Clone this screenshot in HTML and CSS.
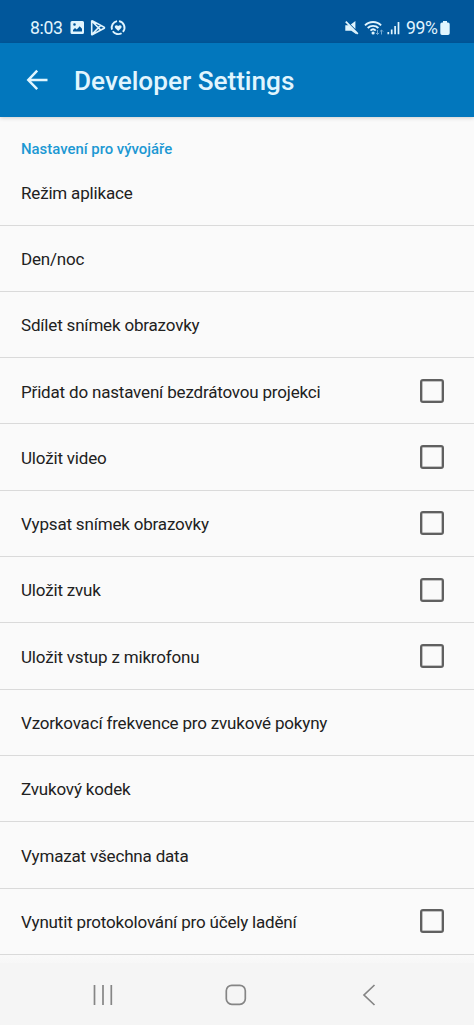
FILE: index.html
```html
<!DOCTYPE html>
<html lang="cs">
<head>
<meta charset="utf-8">
<title>Developer Settings</title>
<link rel="stylesheet" href="styles.css">
</head>
<body>
<div class="screen">
  <div class="status">
    <span class="clock">8:03</span>
    <svg class="notifications" width="58" height="18" viewBox="0 0 58 18" fill="none" stroke="#e1f5fe">
      <path fill="#e1f5fe" stroke="none" fill-rule="evenodd" d="M2 2h10.500q1.500 0 1.500 1.500v10q0 1.500-1.500 1.500H2q-1.500 0-1.500-1.500v-10Q.5 2 2 2zM3 12.500h9V9.700L9.700 7.200 6.800 10.400 5 8.900 3 11zM4.500 4.200a1.300 1.300 0 1 0 0 2.600 1.300 1.300 0 0 0 0-2.600z"/>
      <path stroke-width="1.600" stroke-linejoin="round" d="M21.700 2.100v13.300q.3.400.8.100l11.700-6.200q.6-.5 0-1L22.500 1.900q-.5-.2-.8.200zM22 2.300l8.500 8.600M22 15.200l8.500-8.600"/>
      <path stroke-width="1.900" d="M49 2.100a6.600 6.600 0 0 1 3.900 10.800M51.600 14.200a6.600 6.600 0 0 1-8.800-1.900M42 10.600a6.600 6.600 0 0 1 5-8.500"/>
      <path fill="#e1f5fe" stroke="none" d="M48.200 11.900l-3-3c-1.500-1.900 1.300-3.800 3-1.800 1.700-2 4.500-.1 3 1.800z"/>
    </svg>
    <svg class="signals" width="58" height="18" viewBox="0 0 58 18" fill="none" stroke="#e1f5fe">
      <path fill="#e1f5fe" stroke="none" d="M.3 6.200h3.500L11.300 14v1.200L6.300 11.800H.3zM5.800 5.500L10.400 2v8z"/>
      <path stroke-width="1.800" d="M.8 2.600l12 12.200"/>
      <path stroke-width="1.900" d="M20 6.300c4.400-4.500 11.700-4.500 16.100 0M22.700 9c2.900-2.900 7.800-2.900 10.700 0M25.500 11.600c1.500-1.500 3.700-1.500 5.200 0"/>
      <circle cx="28.100" cy="14" r="1.600" fill="#e1f5fe" stroke="none"/>
      <path stroke="#75a9d3" d="M32.500 11v4.500m-1.600-1.600l1.600 1.600 1.600-1.600M36.500 15.500V11m-1.600 1.600l1.600-1.600 1.600 1.600"/>
      <path stroke-width="1.700" d="M43.300 13v2.200M46.700 10.500v4.700M50.100 7v8.200M53.500 3v12.200"/>
    </svg>
    <span class="percent">99%</span>
    <svg class="battery" width="10" height="15" viewBox="0 0 10 15"><path fill="#e1f5fe" d="M3 0h4v1.500h1q1.700 0 1.700 1.700v9q0 1.800-1.700 1.800H2Q.3 14 .3 12.200v-9Q.3 1.500 2 1.500h1z"/></svg>
  </div>
  <header class="appbar">
    <svg width="22" height="22" viewBox="0 0 22 22" fill="none" stroke="#e1f5fe" stroke-width="2.500"><path d="M11.200 1.600L2.300 11l8.900 9.200M2 11h19.500"/></svg>
    <h1>Developer Settings</h1>
  </header>
  <main class="list">
    <h2>Nastavení pro vývojáře</h2>
    <div class="row">Režim aplikace</div>
    <div class="row">Den/noc</div>
    <div class="row">Sdílet snímek obrazovky</div>
    <div class="row">Přidat do nastavení bezdrátovou projekci<span class="box"></span></div>
    <div class="row">Uložit video<span class="box"></span></div>
    <div class="row">Vypsat snímek obrazovky<span class="box"></span></div>
    <div class="row">Uložit zvuk<span class="box"></span></div>
    <div class="row">Uložit vstup z mikrofonu<span class="box"></span></div>
    <div class="row">Vzorkovací frekvence pro zvukové pokyny</div>
    <div class="row">Zvukový kodek</div>
    <div class="row">Vymazat všechna data</div>
    <div class="row">Vynutit protokolování pro účely ladění<span class="box"></span></div>
  </main>
  <nav class="navbar">
    <svg width="22" height="22" viewBox="0 0 22 22"><path d="M2.500 1v20M11 1v20M19.300 1v20"/></svg>
    <svg width="22" height="22" viewBox="0 0 22 22"><rect x="1.300" y="1.300" width="19" height="19" rx="5.500"/></svg>
    <svg width="22" height="22" viewBox="0 0 22 22"><path d="M16.500 1L6 11l10.500 10"/></svg>
  </nav>
</div>
</body>
</html>
```
FILE: styles.css
```css
body {
  margin: 0;
  background: #fff;
  font-family: Roboto, sans-serif;
}
.screen {
  display: flex;
  flex-direction: column;
  height: 1027px;
  overflow: hidden;
}
.status {
  display: flex;
  align-items: center;
  flex: none;
  box-sizing: border-box;
  height: 43px;
  padding: 13px 24px 0 30px;
  background: #01579b;
  color: #e1f5fe;
  font-size: 17.600px;
  letter-spacing: -.35px;
}
.clock { width: 40px; }
.signals { margin-left: auto; }
.percent { margin-left: 3px; width: 34px; }
.battery { flex: none; }
.appbar {
  display: flex;
  align-items: center;
  gap: 26px;
  flex: none;
  height: 74px;
  padding-left: 26px;
  background: #0277bd;
  color: #e1f5fe;
  box-shadow: 0 1px 4px rgba(0, 0, 0, .18);
  z-index: 1;
}
.appbar h1 {
  margin: 2px 0 0;
  font-size: 26.150px;
  font-weight: 500;
}
.list {
  flex: 1;
  min-height: 0;
  background: linear-gradient(#fafafa 98.800%, #f7f7f7);
}
.list h2 {
  box-sizing: border-box;
  height: 42.300px;
  margin: 0;
  padding: 22px 21px 0;
  color: #1c98d3;
  font-size: 14.900px;
  line-height: 20px;
  font-weight: 500;
}
.row {
  display: flex;
  align-items: center;
  justify-content: space-between;
  box-sizing: border-box;
  height: 66.300px;
  padding: 1.400px 30px 0 21px;
  border-bottom: 1px solid #dadada;
  color: #212121;
  font-size: 17px;
  letter-spacing: -.18px;
}
.box {
  box-sizing: border-box;
  width: 24px;
  height: 24px;
  margin-top: -1.400px;
  border: 2px solid #606060;
  border-radius: 3px;
  box-shadow: inset 0 0 0 .5px #8a8a8a;
}
.navbar {
  display: flex;
  align-items: center;
  justify-content: space-between;
  flex: none;
  box-sizing: border-box;
  height: 62px;
  margin-bottom: 2px;
  padding: 1px 94px 0 92px;
  background: #f5f5f5;
}
.navbar svg {
  fill: none;
  stroke: #858585;
  stroke-width: 1.700;
}
```
